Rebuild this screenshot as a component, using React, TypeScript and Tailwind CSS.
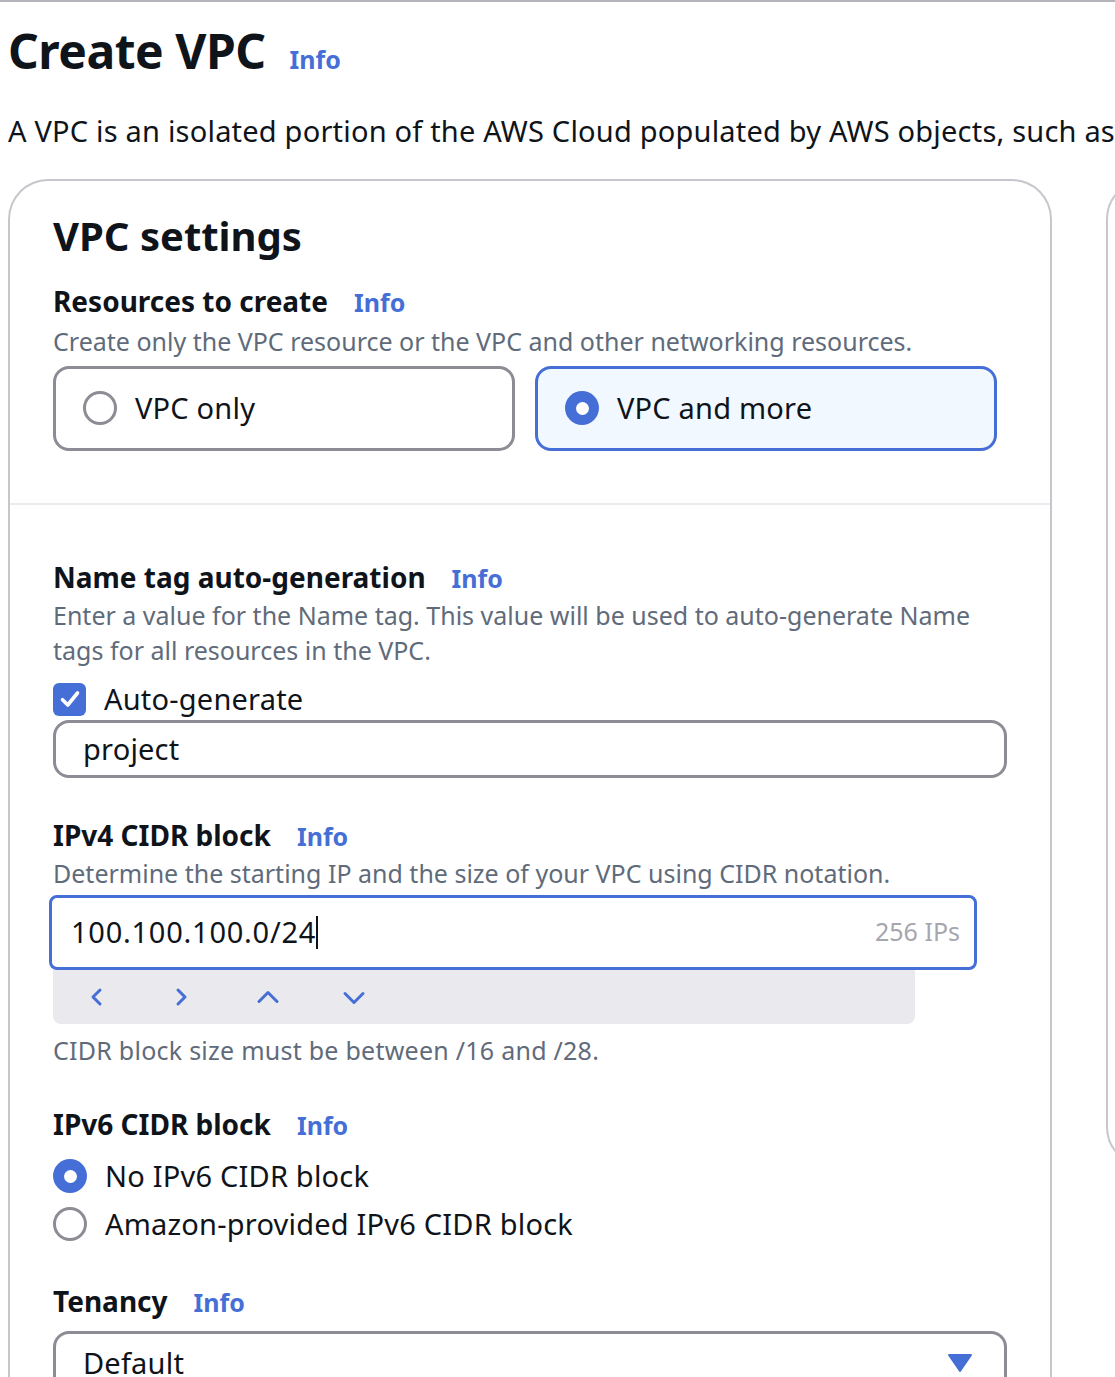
import React from "react";

const font = { fontFamily: '"Noto Sans", "Open Sans", sans-serif' };

function Info() {
  return <span className="text-[25px] font-bold text-[#456fd6]">Info</span>;
}

function Radio({ checked }: { checked: boolean }) {
  return checked ? (
    <span className="flex h-[34px] w-[34px] shrink-0 items-center justify-center rounded-full bg-[#456fd6]">
      <span className="h-[13px] w-[13px] rounded-full bg-white" />
    </span>
  ) : (
    <span className="h-[34px] w-[34px] shrink-0 rounded-full border-[3px] border-[#8c8c94] bg-white" />
  );
}

function Chevron({ d }: { d: string }) {
  return (
    <svg width="24" height="24" viewBox="0 0 24 24" fill="none" stroke="#456fd6" strokeWidth="3" strokeLinecap="round" strokeLinejoin="round">
      <path d={d} />
    </svg>
  );
}

export default function App() {
  return (
    <div style={font} className="h-[1377px] w-[1115px] overflow-hidden border-t-2 border-[#b4b4bb] bg-white text-[#0f141a]">
      <div className="pl-2">
        {/* Page header */}
        <div className="flex items-baseline gap-6 pt-[20px]">
          <h1 className="text-[48px] font-bold leading-[58px] tracking-[-0.5px]">Create VPC</h1>
          <Info />
        </div>
        <p className="mt-[33px] whitespace-nowrap text-[29px] leading-[36px] tracking-[0.2px]">
          A VPC is an isolated portion of the AWS Cloud populated by AWS objects, such as
        </p>

        <div className="mt-[30px] flex gap-[54px]">
          {/* Main container */}
          <div className="w-[1044px] shrink-0 rounded-t-[40px] border-2 border-b-0 border-[#c6c6cd]">
            <div className="px-[43px] pb-[52px] pt-[30px]">
              <h2 className="text-[40px] font-bold leading-[50px]">VPC settings</h2>
              <div className="mt-[22px] flex items-baseline gap-[26px]">
                <span className="text-[28px] font-bold leading-[36px]">Resources to create</span>
                <Info />
              </div>
              <p className="mt-[2px] text-[25px] leading-[34px] text-[#5f6b7a]">
                Create only the VPC resource or the VPC and other networking resources.
              </p>
              <div className="mt-[8px] flex gap-[20px]">
                <div className="flex h-[85px] w-[462px] items-center gap-[18px] rounded-[16px] border-[3px] border-[#8c8c94] px-[27px]">
                  <Radio checked={false} />
                  <span className="text-[29px] tracking-[0.2px]">VPC only</span>
                </div>
                <div className="flex h-[85px] w-[462px] items-center gap-[18px] rounded-[16px] border-[3px] border-[#456fd6] bg-[#f1f8ff] px-[27px]">
                  <Radio checked />
                  <span className="text-[29px] tracking-[0.2px]">VPC and more</span>
                </div>
              </div>
            </div>
            <div className="h-[2px] bg-[#e9ebed]" />

            <div className="px-[43px] pt-[54px]">
              {/* Name tag */}
              <div className="flex items-baseline gap-[26px]">
                <span className="text-[28px] font-bold leading-[36px]">Name tag auto-generation</span>
                <Info />
              </div>
              <p className="mt-[1px] w-[940px] text-[25px] leading-[35px] text-[#5f6b7a]">
                Enter a value for the Name tag. This value will be used to auto-generate Name tags for all resources in the VPC.
              </p>
              <div className="mt-[13px] flex items-center gap-[18px]">
                <span className="flex h-[33px] w-[33px] items-center justify-center rounded-[6px] bg-[#456fd6]">
                  <svg width="24" height="24" viewBox="0 0 16 16" fill="none" stroke="white" strokeWidth="2.4" strokeLinecap="round" strokeLinejoin="round">
                    <path d="M3 8.5 6.5 12 13 4" />
                  </svg>
                </span>
                <span className="text-[29px] leading-[36px] tracking-[0.2px]">Auto-generate</span>
              </div>
              <div className="mt-[3px] flex h-[58px] w-[954px] items-center rounded-[16px] border-[3px] border-[#8c8c94] px-[27px] text-[29px] tracking-[0.2px]">
                project
              </div>

              {/* IPv4 */}
              <div className="mt-[39px] flex items-baseline gap-[26px]">
                <span className="text-[28px] font-bold leading-[36px]">IPv4 CIDR block</span>
                <Info />
              </div>
              <p className="text-[25px] leading-[34px] text-[#5f6b7a]">
                Determine the starting IP and the size of your VPC using CIDR notation.
              </p>
              <div className="-ml-[4px] mt-[5px] w-[928px]">
                <div className="flex h-[75px] items-center justify-between rounded-[8px] border-[3px] border-[#456fd6] pl-[19px] pr-[14px]">
                  <span className="flex items-center text-[29px] tracking-[0.75px]">
                    100.100.100.0/24
                    <span className="h-[33px] w-[2px] bg-[#0f141a]" />
                  </span>
                  <span className="text-[25px] text-[#a6a6ae]">256 IPs</span>
                </div>
                <div className="ml-[4px] flex h-[54px] w-[862px] items-center gap-[62px] rounded-b-[8px] bg-[#e9e9ee] pl-[31px]">
                  <Chevron d="M16 5 9 12l7 7" />
                  <Chevron d="M8 5l7 7-7 7" />
                  <Chevron d="M3 16.5 12 7.5l9 9" />
                  <Chevron d="M3 8.5 12 17.5l9-9" />
                </div>
              </div>
              <p className="mt-[9px] text-[25px] leading-[34px] tracking-[0.25px] text-[#5f6b7a]">
                CIDR block size must be between /16 and /28.
              </p>

              {/* IPv6 */}
              <div className="mt-[39px] flex items-baseline gap-[26px]">
                <span className="text-[28px] font-bold leading-[36px]">IPv6 CIDR block</span>
                <Info />
              </div>
              <div className="mt-[14px] flex flex-col gap-[12px]">
                <div className="flex items-center gap-[18px]">
                  <Radio checked />
                  <span className="text-[29px] leading-[36px] tracking-[0.2px]">No IPv6 CIDR block</span>
                </div>
                <div className="flex items-center gap-[18px]">
                  <Radio checked={false} />
                  <span className="text-[29px] leading-[36px] tracking-[0.2px]">Amazon-provided IPv6 CIDR block</span>
                </div>
              </div>

              {/* Tenancy */}
              <div className="mt-[41px] flex items-baseline gap-[26px]">
                <span className="text-[28px] font-bold leading-[36px]">Tenancy</span>
                <Info />
              </div>
              <div className="mt-[9px] flex h-[62px] w-[954px] items-center justify-between rounded-t-[16px] border-[3px] border-b-0 border-[#8c8c94] pl-[27px] pr-[32px] text-[29px] tracking-[0.2px]">
                <span>Default</span>
                <svg width="24" height="18" viewBox="0 0 24 18">
                  <path d="M1 1h22L12 17z" fill="#456fd6" stroke="#456fd6" strokeLinejoin="round" strokeWidth="2" />
                </svg>
              </div>
            </div>
          </div>

          {/* Next container peeking in */}
          <div className="h-[988px] w-[400px] shrink-0 rounded-[40px] border-2 border-[#c6c6cd]" />
        </div>
      </div>
    </div>
  );
}
